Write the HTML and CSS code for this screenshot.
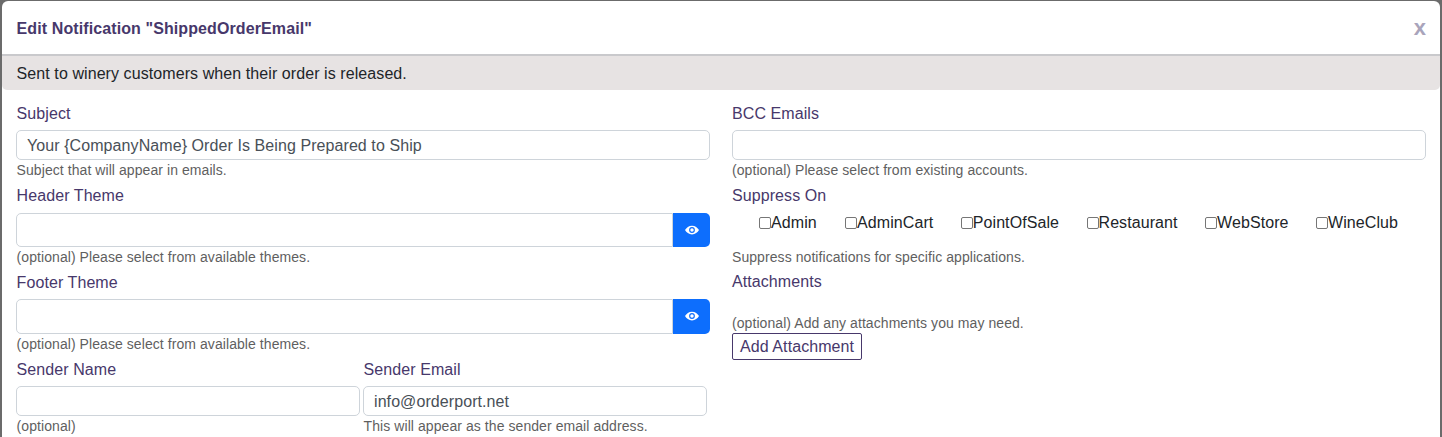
FILE: index.html
```html
<!DOCTYPE html>
<html lang="en">
<head>
<meta charset="utf-8">
<title>Edit Notification</title>
<link rel="stylesheet" href="styles.css">
</head>
<body>
<div class="modal">
  <header class="modal-header">
    <h1 class="modal-title">Edit Notification "ShippedOrderEmail"</h1>
    <span class="close">x</span>
  </header>
  <div class="notice">Sent to winery customers when their order is released.</div>
  <form class="form">
    <div class="col col-left">
      <div class="field field-first">
        <label class="label">Subject</label>
        <input class="input" type="text" value="Your {CompanyName} Order Is Being Prepared to Ship">
        <div class="help">Subject that will appear in emails.</div>
      </div>
      <div class="field">
        <label class="label">Header Theme</label>
        <div class="group">
          <input class="input group-input" type="text">
          <button class="eye-btn" type="button"><svg class="eye" viewBox="0 0 16 16"><path fill="currentColor" d="M8 3C4.400 3 1.600 5.400 0 8c1.600 2.600 4.400 5 8 5s6.400-2.400 8-5c-1.600-2.600-4.400-5-8-5zm0 8.300A3.300 3.300 0 1 1 8 4.700a3.300 3.300 0 0 1 0 6.600zM8 6a2 2 0 1 0 0 4 2 2 0 0 0 0-4z"/></svg></button>
        </div>
        <div class="help">(optional) Please select from available themes.</div>
      </div>
      <div class="field">
        <label class="label">Footer Theme</label>
        <div class="group">
          <input class="input group-input" type="text">
          <button class="eye-btn" type="button"><svg class="eye" viewBox="0 0 16 16"><path fill="currentColor" d="M8 3C4.400 3 1.600 5.400 0 8c1.600 2.600 4.400 5 8 5s6.400-2.400 8-5c-1.600-2.600-4.400-5-8-5zm0 8.300A3.300 3.300 0 1 1 8 4.700a3.300 3.300 0 0 1 0 6.600zM8 6a2 2 0 1 0 0 4 2 2 0 0 0 0-4z"/></svg></button>
        </div>
        <div class="help">(optional) Please select from available themes.</div>
      </div>
      <div class="sender">
        <div class="field">
          <label class="label">Sender Name</label>
          <input class="input" type="text">
          <div class="help">(optional)</div>
        </div>
        <div class="field">
          <label class="label">Sender Email</label>
          <input class="input" type="text" value="info@orderport.net">
          <div class="help">This will appear as the sender email address.</div>
        </div>
      </div>
    </div>
    <div class="col col-right">
      <div class="field field-first">
        <label class="label">BCC Emails</label>
        <input class="input" type="text">
        <div class="help">(optional) Please select from existing accounts.</div>
      </div>
      <div class="field field-suppress">
        <label class="label">Suppress On</label>
        <div class="checks">
          <label class="check"><input type="checkbox">Admin</label>
          <label class="check"><input type="checkbox">AdminCart</label>
          <label class="check"><input type="checkbox">PointOfSale</label>
          <label class="check"><input type="checkbox">Restaurant</label>
          <label class="check"><input type="checkbox">WebStore</label>
          <label class="check"><input type="checkbox">WineClub</label>
        </div>
        <div class="help">Suppress notifications for specific applications.</div>
      </div>
      <div class="field">
        <label class="label">Attachments</label>
        <div class="attach-list"></div>
        <div class="help">(optional) Add any attachments you may need.</div>
        <button class="attach-btn" type="button">Add Attachment</button>
      </div>
    </div>
  </form>
</div>
</body>
</html>
```
FILE: styles.css
```css
* { box-sizing: border-box; }
html, body { margin: 0; height: 100%; }
body {
  background: #6b6b6b;
  font-family: "Liberation Sans", Arial, sans-serif;
  font-size: 16px;
  letter-spacing: 0.08px;
  color: #212529;
  overflow: hidden;
  padding: 1px 2px 0 2px;
}
.modal {
  background: #fff;
  border-radius: 6px 6px 0 0;
  height: 600px;
}
.modal-header {
  display: flex;
  justify-content: space-between;
  align-items: center;
  height: 55px;
  padding: 0 14px 0 14.6px;
  border-bottom: 2px solid #c9c9cc;
}
.modal-title {
  margin: 2px 0 0;
  font-size: 16px;
  font-weight: 700;
  letter-spacing: 0.1px;
  color: #47386b;
}
.close {
  font-size: 22px;
  font-weight: 700;
  color: #a9a4bb;
  line-height: 1;
}
.notice {
  background: #e7e3e3;
  height: 34px;
  line-height: 35px;
  padding-left: 14.6px;
  border-radius: 0 0 5px 5px;
}
.form {
  display: grid;
  grid-template-columns: 694px 694px;
  column-gap: 22px;
  padding: 11px 14px 0;
}
.field { margin-bottom: 4.7px; }
.field-first { margin-bottom: 5px; }
.field-suppress { margin-bottom: 4px; }
.label {
  display: block;
  height: 24px;
  line-height: 26px;
  padding-left: 0.6px;
  color: #47386b;
  margin-bottom: 5px;
}
.input {
  display: block;
  width: 100%;
  height: 30px;
  border: 1px solid #ced4da;
  border-radius: 5px;
  padding: 2px 10px 0;
  font: 16px "Liberation Sans", Arial, sans-serif;
  letter-spacing: 0.08px;
  color: #495057;
  background: #fff;
}
.help {
  height: 18px;
  line-height: 21px;
  padding-left: 0.6px;
  font-size: 14px;
  letter-spacing: 0.07px;
  color: #5f5f5f;
}
.col-right .label,
.col-right .help { padding-left: 0; }
.group { display: flex; height: 34.5px; margin-top: 5.5px; }
.group-input {
  flex: 1;
  height: 100%;
  border-radius: 5px 0 0 5px;
}
.eye-btn {
  width: 37px;
  height: 100%;
  border: none;
  background: #0d6efd;
  color: #fff;
  border-radius: 0 5px 5px 0;
  padding: 0;
  display: flex;
  align-items: center;
  justify-content: center;
}
.eye { width: 14px; height: 14px; }
.sender {
  display: grid;
  grid-template-columns: 344px 344px;
  column-gap: 3px;
  padding-top: 0.6px;
}
.checks {
  display: flex;
  justify-content: space-between;
  height: 28px;
  padding: 0 28px 0 27px;
  margin-top: -3px;
  align-items: center;
  margin-bottom: 10px;
}
.check {
  display: flex;
  align-items: center;
  color: #212529;
}
.check:first-child { margin-right: 0.8px; }
.check input {
  margin: 0;
  width: 12px;
  height: 12px;
  appearance: none;
  border: 1px solid #767676;
  border-radius: 2px;
  background: #fff;
}
.attach-list { height: 15px; }
.attach-btn {
  display: block;
  height: 27px;
  margin-top: 2px;
  padding: 0 7px;
  font: 16px "Liberation Sans", Arial, sans-serif;
  letter-spacing: 0.08px;
  color: #47386b;
  background: #fff;
  border: 1px solid #47386b;
  border-radius: 2px;
}
```
